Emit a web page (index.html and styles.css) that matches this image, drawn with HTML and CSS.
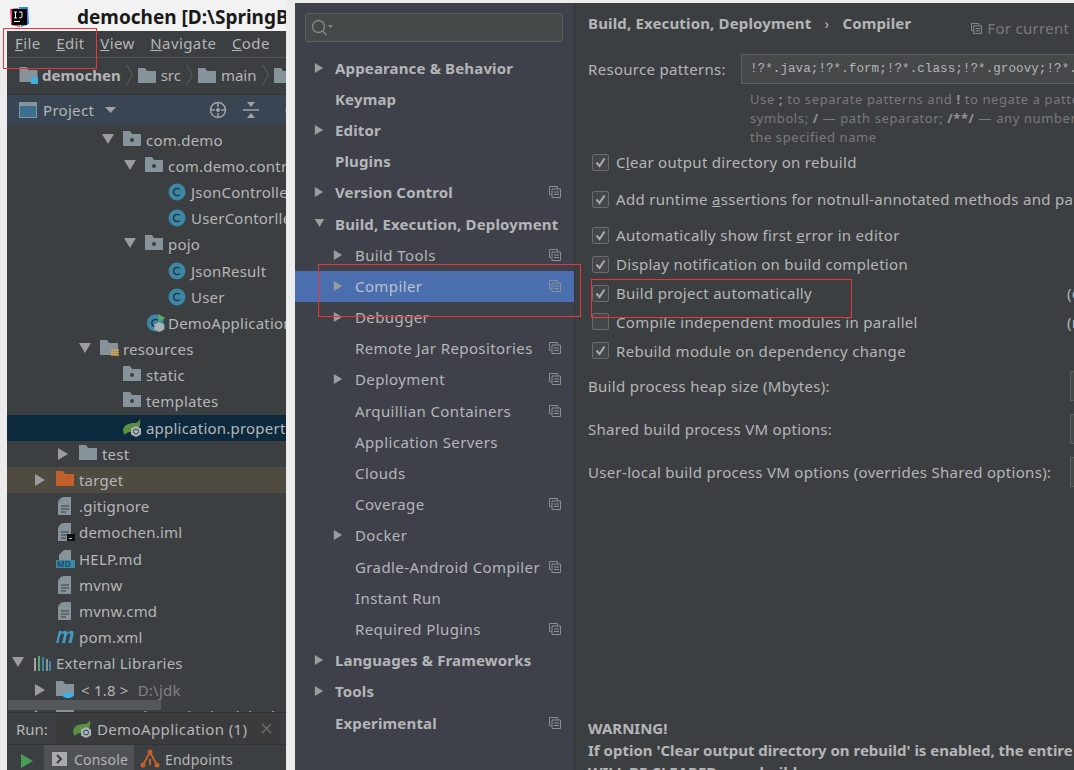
FILE: index.html
```html
<!DOCTYPE html>
<html lang="en">
  <head>
    <meta charset="UTF-8" />
    <title>demochen - Settings</title>
    <link rel="stylesheet" href="styles.css">
  </head>
  <body>
    <svg class="defs" width="0" height="0">
      <symbol id="right" viewBox="0 0 12 14"><path d="M1 1l10 6-10 6z" fill="#9a9c9e"/></symbol>
      <symbol id="down" viewBox="0 0 14 12"><path d="M1 1h12l-6 10z" fill="#9a9c9e"/></symbol>
      <symbol id="pkg" viewBox="0 0 18 15"><path d="M0 0h7l2 3h9v12H0z" fill="#87939a"/><circle cx="9" cy="9" r="2" fill="#3c3f41"/></symbol>
      <symbol id="folder" viewBox="0 0 18 15"><path d="M0 0h7l2 3h9v12H0z" fill="#87939a"/></symbol>
      <symbol id="cls" viewBox="0 0 18 18"><circle cx="9" cy="9" r="8.5" fill="#3d87a6"/><path d="M11.500 6.500a3.500 3.500 0 1 0 0 5" fill="none" stroke="#26323a" stroke-width="1.500"/></symbol>
      <symbol id="file" viewBox="0 0 14 18"><path d="M5 0h8v18H0V5z" fill="#87939a"/><path d="M4 0v4H0z" fill="#87939a"/><path d="M3 9h8M3 12h8M3 15h5" stroke="#3c3f41"/></symbol>
      <symbol id="leaf" viewBox="0 0 20 18"><path d="M0 11C1 5 7 4 12 4c2 0 4-2 5-4 1 6-1 13-8 13-3 0-5 0-7 3-1-1-2-3-2-5z" fill="#5d8f43"/><path d="M13 7l5 2.500v6L13 18l-5-2.500v-6z" fill="#a8b3ba"/><circle cx="13" cy="12.500" r="2.500" fill="none" stroke="#3c3f41"/></symbol>
      <symbol id="copy" viewBox="0 0 12 12"><path d="M.5.500h8v2M.5.500v8h2" fill="none" stroke="#8b8f92"/><path d="M3 3h8.500v8.500H3z" fill="none" stroke="#8b8f92"/><path d="M5 6h5M5 8.500h5" stroke="#8b8f92"/></symbol>
      <symbol id="check" viewBox="0 0 17 17"><path d="M4.500 8.500l3 3.500 5-7.500" fill="none" stroke="#a9abad" stroke-width="2"/></symbol>
      <symbol id="chev" viewBox="0 0 7 20"><path d="M.5 0l6 10-6 10" fill="none" stroke="#5d6062"/></symbol>
    </svg>

    <section class="ide">
      <header class="titlebar">
        <svg class="logo" width="20" height="20" viewBox="0 0 20 20"><path d="M1 2l8-1 2 19-9-2z" fill="#f0447c"/><path d="M10 0h9l1 17-8 3z" fill="#1e8fe0"/><rect x="3" y="2" width="15" height="16" fill="#000"/><rect x="5" y="14" width="6" height="1" fill="#fff"/><path d="M5 5h3M6.500 5v6M5 11h3M10 5h3v5c0 1-2 1-3 .500" fill="none" stroke="#fff"/></svg>
        <span class="title">demochen [D:\SpringBoot]</span>
      </header>
      <nav class="menu">
        <span><u>F</u>ile</span><span><u>E</u>dit</span><span><u>V</u>iew</span><span><u>N</u>avigate</span><span><u>C</u>ode</span>
      </nav>
      <div class="crumbs">
        <span class="crumb-root"><svg width="19" height="17"><use href="#folder" width="19" height="15"/><rect x="12" y="10" width="7" height="7" fill="#3eb1e0"/></svg><b>demochen</b></span>
        <svg width="7" height="20"><use href="#chev"/></svg>
        <svg width="18" height="15"><use href="#folder"/></svg><span>src</span>
        <svg width="7" height="20"><use href="#chev"/></svg>
        <svg width="18" height="15"><use href="#folder"/></svg><span>main</span>
        <svg width="7" height="20"><use href="#chev"/></svg>
        <svg width="18" height="15"><use href="#folder"/></svg>
      </div>
      <div class="toolbar">
        <svg class="win-icon" width="18" height="16"><rect x=".5" y=".5" width="17" height="15" fill="#3a6f8f" stroke="#87939a"/><rect x="1" y="1" width="16" height="3" fill="#87939a"/></svg>
        <span class="tool-name">Project</span>
        <svg class="caret" width="11" height="6"><path d="M0 0h11L5.500 6z" fill="#a0a2a4"/></svg>
        <span class="tool-sep"></span>
        <svg class="target" width="18" height="18" viewBox="0 0 18 18"><circle cx="9" cy="9" r="7.500" fill="none" stroke="#a0a2a4" stroke-width="1.500"/><circle cx="9" cy="9" r="2" fill="#a0a2a4"/><path d="M9 1v5M9 12v5M1 9h5M12 9h5" stroke="#a0a2a4" stroke-width="1.500"/></svg>
        <svg class="collapse" width="16" height="18" viewBox="0 0 16 18"><path d="M0 9h16" stroke="#a0a2a4" stroke-width="1.500"/><path d="M4 1h8L8 6zM4 17h8l-4-5z" fill="#a0a2a4"/></svg>
        <span class="tool-sep2"></span>
        <svg width="14" height="14"><circle cx="9" cy="7" r="4" fill="none" stroke="#a0a2a4" stroke-width="3"/></svg>
      </div>

      <ul class="tree">
        <li class="lv4"><svg class="arrow"><use href="#down" width="14" height="12"/></svg><svg class="ico"><use href="#pkg" width="18" height="15"/></svg>com.demo</li>
        <li class="lv5"><svg class="arrow"><use href="#down" width="14" height="12"/></svg><svg class="ico"><use href="#pkg" width="18" height="15"/></svg>com.demo.controller</li>
        <li class="lv6"><span class="arrow"></span><svg class="ico"><use href="#cls" width="18" height="18"/></svg>JsonController</li>
        <li class="lv6"><span class="arrow"></span><svg class="ico"><use href="#cls" width="18" height="18"/></svg>UserContorller</li>
        <li class="lv5"><svg class="arrow"><use href="#down" width="14" height="12"/></svg><svg class="ico"><use href="#pkg" width="18" height="15"/></svg>pojo</li>
        <li class="lv6"><span class="arrow"></span><svg class="ico"><use href="#cls" width="18" height="18"/></svg>JsonResult</li>
        <li class="lv6"><span class="arrow"></span><svg class="ico"><use href="#cls" width="18" height="18"/></svg>User</li>
        <li class="lv5"><span class="arrow"></span><svg class="ico" viewBox="0 0 20 18"><use href="#cls" width="18" height="18"/><path d="M12 0l7 4-7 4z" fill="#59a869"/><path d="M13 8l5 2.500v5L13 18l-5-2.500v-5z" fill="#a8b3ba"/></svg>DemoApplication</li>
        <li class="lv3"><svg class="arrow"><use href="#down" width="14" height="12"/></svg><svg class="ico"><use href="#folder" width="18" height="15"/><path d="M11 10h8M11 12.500h8M11 15h8" stroke="#d6a13a" stroke-width="1.500"/></svg>resources</li>
        <li class="lv4"><span class="arrow"></span><svg class="ico"><use href="#pkg" width="18" height="15"/></svg>static</li>
        <li class="lv4"><span class="arrow"></span><svg class="ico"><use href="#pkg" width="18" height="15"/></svg>templates</li>
        <li class="lv4 picked"><span class="arrow"></span><svg class="ico"><use href="#leaf" width="20" height="18"/></svg>application.properties</li>
        <li class="lv2"><svg class="arrow"><use href="#right" width="12" height="14"/></svg><svg class="ico"><use href="#folder" width="18" height="15"/></svg>test</li>
        <li class="lv1 excluded"><svg class="arrow"><use href="#right" width="12" height="14"/></svg><svg class="ico"><path d="M0 0h7l2 3h9v12H0z" fill="#c1602b"/></svg>target</li>
        <li class="lv1"><span class="arrow"></span><svg class="ico"><use href="#file" x="2" width="14" height="18"/></svg>.gitignore</li>
        <li class="lv1"><span class="arrow"></span><svg class="ico"><use href="#file" x="2" width="14" height="18"/><rect x="11" y="11" width="8" height="7" fill="#111"/><rect x="13" y="15" width="3" height="1" fill="#bbb"/></svg>demochen.iml</li>
        <li class="lv1"><span class="arrow"></span><svg class="ico"><path d="M8 0h7v10H3V5z" fill="#87939a"/><rect y="10" width="19" height="8" fill="#3d87a6"/><text class="md" x="1" y="17">MD</text></svg>HELP.md</li>
        <li class="lv1"><span class="arrow"></span><svg class="ico"><use href="#file" x="2" width="14" height="18"/></svg>mvnw</li>
        <li class="lv1"><span class="arrow"></span><svg class="ico"><use href="#file" x="2" width="14" height="18"/></svg>mvnw.cmd</li>
        <li class="lv1"><span class="arrow"></span><svg class="ico"><path d="M0 15L3 3h3l-.500 2c2-3 5-3 6 0 2-3 7-3 6 1l-2 9h-3l2-8c0-2-3-2-4 1l-1.500 7h-3l2-8c0-2-3-2-4 1l-1.500 7z" fill="#3d9bc4"/></svg>pom.xml</li>
        <li class="lv0"><svg class="arrow"><use href="#down" width="14" height="12"/></svg><svg class="ico"><path d="M1 4h2v13H1z" fill="#a0a2a4"/><path d="M5 2h2v15H5z" fill="#59a869"/><path d="M9 3h2v14H9z" fill="#3d87a6"/><path d="M13 5h2v12h-2z" fill="#87939a"/><path d="M16 7h2v10h-2z" fill="#3d87a6"/></svg>External Libraries</li>
        <li class="lv1"><svg class="arrow"><use href="#right" width="12" height="14"/></svg><svg class="ico"><use href="#folder" width="18" height="15"/><path d="M6 12h12c0 3-2 5-6 5s-6-2-6-5z" fill="#3eb1e0"/></svg><span class="jdk">&lt; 1.8 &gt;</span><span class="dim">D:\jdk</span></li>
        <li class="lv1"><svg class="arrow"><use href="#right" width="12" height="14"/></svg><svg class="ico"><use href="#folder" width="18" height="15"/></svg>Maven: ch.qos.logback:logback</li>
      </ul>
      <div class="h-scroll"></div>

      <div class="run-bar">
        <span class="run-label">Run:</span>
        <span class="run-tab"><svg width="20" height="18"><use href="#leaf" width="20" height="18"/></svg>DemoApplication (1)<svg class="close" width="11" height="11"><path d="M1 1l9 9M10 1l-9 9" stroke="#6e7173" stroke-width="1.200"/></svg></span>
      </div>
      <div class="console-bar">
        <svg class="play" width="14" height="16"><path d="M1 1l12 7-12 7z" fill="#499c54"/></svg>
        <span class="con-tab on"><svg width="15" height="14"><rect width="15" height="14" fill="#a9abad"/><path d="M5 3l4 4-4 4" fill="none" stroke="#3c3f41" stroke-width="2"/></svg>Console</span>
        <span class="con-tab"><svg width="20" height="20" viewBox="0 0 20 20"><path d="M10 3L3 16M10 3l7 13M10 10v6" stroke="#c1602b" stroke-width="2" fill="none"/><circle cx="10" cy="3" r="2.500" fill="#c1602b"/><circle cx="3" cy="16" r="2.500" fill="#c1602b"/><circle cx="17" cy="16" r="2.500" fill="#c1602b"/></svg>Endpoints</span>
      </div>
    </section>

    <section class="settings">
      <aside class="side">
        <div class="search">
          <svg width="22" height="18" viewBox="0 0 22 18"><circle cx="7.500" cy="7.500" r="6" fill="none" stroke="#85888a" stroke-width="1.300"/><path d="M11.500 12l4 4" stroke="#85888a" stroke-width="1.300"/><path d="M17 6h5l-2.500 3z" fill="#85888a"/></svg>
        </div>
        <ul class="side-list">
          <li class="top"><svg class="tw"><use href="#right" width="10" height="12"/></svg>Appearance &amp; Behavior</li>
          <li class="top"><span class="tw"></span>Keymap</li>
          <li class="top"><svg class="tw"><use href="#right" width="10" height="12"/></svg>Editor</li>
          <li class="top"><span class="tw"></span>Plugins</li>
          <li class="top"><svg class="tw"><use href="#right" width="10" height="12"/></svg>Version Control<svg class="cp"><use href="#copy" width="12" height="12"/></svg></li>
          <li class="top"><svg class="tw"><use href="#down" width="11" height="10"/></svg>Build, Execution, Deployment</li>
          <li class="sub"><svg class="tw"><use href="#right" width="10" height="12"/></svg>Build Tools<svg class="cp"><use href="#copy" width="12" height="12"/></svg></li>
          <li class="sub current"><svg class="tw"><use href="#right" width="10" height="12"/></svg>Compiler<svg class="cp"><use href="#copy" width="12" height="12"/></svg></li>
          <li class="sub"><svg class="tw"><use href="#right" width="10" height="12"/></svg>Debugger</li>
          <li class="sub"><span class="tw"></span>Remote Jar Repositories<svg class="cp"><use href="#copy" width="12" height="12"/></svg></li>
          <li class="sub"><svg class="tw"><use href="#right" width="10" height="12"/></svg>Deployment<svg class="cp"><use href="#copy" width="12" height="12"/></svg></li>
          <li class="sub"><span class="tw"></span>Arquillian Containers<svg class="cp"><use href="#copy" width="12" height="12"/></svg></li>
          <li class="sub"><span class="tw"></span>Application Servers</li>
          <li class="sub"><span class="tw"></span>Clouds</li>
          <li class="sub"><span class="tw"></span>Coverage<svg class="cp"><use href="#copy" width="12" height="12"/></svg></li>
          <li class="sub"><svg class="tw"><use href="#right" width="10" height="12"/></svg>Docker</li>
          <li class="sub"><span class="tw"></span>Gradle-Android Compiler<svg class="cp"><use href="#copy" width="12" height="12"/></svg></li>
          <li class="sub"><span class="tw"></span>Instant Run</li>
          <li class="sub"><span class="tw"></span>Required Plugins<svg class="cp"><use href="#copy" width="12" height="12"/></svg></li>
          <li class="top"><svg class="tw"><use href="#right" width="10" height="12"/></svg>Languages &amp; Frameworks</li>
          <li class="top"><svg class="tw"><use href="#right" width="10" height="12"/></svg>Tools</li>
          <li class="top"><span class="tw"></span>Experimental<svg class="cp"><use href="#copy" width="12" height="12"/></svg></li>
        </ul>
      </aside>

      <main class="panel">
        <div class="heading">
          <b>Build, Execution, Deployment</b><span class="gt">›</span><b>Compiler</b>
          <span class="scope"><svg width="11" height="11"><use href="#copy" width="11" height="11"/></svg>For current project</span>
        </div>
        <div class="patterns">
          <label>Resource patterns:</label>
          <div class="pattern-box">!?*.java;!?*.form;!?*.class;!?*.groovy;!?*.scala;!?*.flex</div>
        </div>
        <p class="hint">Use <b>;</b> to separate patterns and <b>!</b> to negate a pattern. Accepted wildcards: <b>?</b> — exactly one<br>symbols; <b>/</b> — path separator; <b>/**/</b> — any number of directories; <b>&lt;dir_name&gt;:&lt;pattern&gt;</b> restrict to<br>the specified name</p>

        <div class="chk chk-first"><span class="box"><svg width="17" height="17"><use href="#check"/></svg></span><span>C<u>l</u>ear output directory on rebuild</span></div>
        <div class="chk chk-wide"><span class="box"><svg width="17" height="17"><use href="#check"/></svg></span><span>Add runtime <u>a</u>ssertions for notnull-annotated methods and parameters</span></div>
        <div class="chk"><span class="box"><svg width="17" height="17"><use href="#check"/></svg></span><span>Automatically show first <u>e</u>rror in editor</span></div>
        <div class="chk"><span class="box"><svg width="17" height="17"><use href="#check"/></svg></span><span>Display notification on build completion</span></div>
        <div class="chk noted"><span class="lbl"><span class="box"><svg width="17" height="17"><use href="#check"/></svg></span>Build project automatically</span><span>(only works while not running / debugging)</span></div>
        <div class="chk noted"><span class="lbl"><span class="box"></span>Compile independent modules in parallel</span><span>(may require larger heap size)</span></div>
        <div class="chk"><span class="box"><svg width="17" height="17"><use href="#check"/></svg></span><span>Rebuild module on dependency change</span></div>

        <div class="opt opt-first"><label>Build process heap size (Mbytes):</label><span class="field"></span></div>
        <div class="opt"><label>Shared build process VM options:</label><span class="field"></span></div>
        <div class="opt"><label>User-local build process VM options (overrides Shared options):</label><span class="field"></span></div>

        <div class="warning">WARNING!<br>If option 'Clear output directory on rebuild' is enabled, the entire contents of directories where<br>WILL BE CLEARED on rebuild.</div>
      </main>
    </section>

    <div class="mark mark-menu"></div>
    <div class="mark mark-compiler"></div>
    <div class="mark mark-build"></div>
  </body>
</html>
```

FILE: styles.css
```css
* {
  box-sizing: border-box;
}

html,
body {
  height: 100%;
}

body {
  margin: 0;
  display: flex;
  overflow: hidden;
  background-color: #ececec;
  color: #b4b6b8;
  font-family: "Noto Sans", sans-serif;
  font-size: 15px;
  white-space: nowrap;
}

ul {
  list-style: none;
  margin: 0;
  padding: 0;
}

svg {
  flex: none;
}

.defs {
  position: absolute;
}

/* left: IDE window */
.ide {
  width: 286px;
  padding-left: 7px;
  margin-right: 9px;
  display: flex;
  flex-direction: column;
  flex: none;
  overflow: hidden;
}

.titlebar {
  height: 31px;
  margin-left: -7px;
  padding: 2px 0 0 9px;
  background-color: #f2f2f2;
  display: flex;
  align-items: center;
  flex: none;
}

.title {
  margin-left: 48px;
  color: #1a1a1a;
  font-size: 19px;
  font-weight: 700;
}

.menu {
  height: 27px;
  padding: 0 0 2px 8px;
  background-color: #3c3f41;
  border-bottom: 1px solid #515456;
  display: flex;
  align-items: center;
  gap: 15.6px;
  letter-spacing: 0.4px;
  flex: none;
}

.crumbs {
  height: 36px;
  padding: 0 0 2px 12px;
  background-color: #3c3f41;
  display: flex;
  align-items: center;
  gap: 5px;
  flex: none;
}

.crumb-root {
  display: flex;
  align-items: center;
  gap: 4px;
}

.toolbar {
  height: 31px;
  padding: 0 0 1px 12px;
  background-color: #3a4553;
  border-top: 1px solid #333638;
  display: flex;
  align-items: center;
  flex: none;
}

.tool-name {
  margin-left: 6px;
  letter-spacing: 0.3px;
}

.caret {
  margin-left: 11px;
}

.tool-sep {
  width: 1px;
  height: 30px;
  margin: 0 16px 0 77px;
  background-color: #2f3338;
}

.collapse {
  margin-left: 16px;
}

.tool-sep2 {
  width: 1px;
  height: 22px;
  margin: 0 10px 0 13px;
  background-color: #4c5561;
}

.tree {
  height: 587px;
  padding-top: 1.5px;
  background-color: #3c3f41;
  letter-spacing: 0.22px;
  overflow: hidden;
  flex: none;
}

.tree li {
  height: 26.2px;
  display: flex;
  align-items: center;
}

.lv0 { padding-left: 4px; }
.lv1 { padding-left: 27px; }
.lv2 { padding-left: 50px; }
.lv3 { padding-left: 71px; }
.lv4 { padding-left: 94px; }
.lv5 { padding-left: 116px; }
.lv6 { padding-left: 139px; }

.arrow {
  width: 22.4px;
  height: 14px;
  flex: none;
}

.ico {
  width: 22.6px;
  height: 18px;
  flex: none;
}

.md {
  fill: #1f5068;
  font-size: 8px;
  font-weight: 700;
}

.tree .picked {
  background-color: #0d293e;
}

.tree .excluded {
  background-color: #4f4b41;
}

.jdk {
  margin-left: 2px;
}

.dim {
  margin-left: 9px;
  color: #808284;
}

.h-scroll {
  position: absolute;
  left: 8px;
  top: 700px;
  width: 153px;
  height: 10px;
  background-color: #55585a;
}

.run-bar {
  height: 32px;
  background-color: #3c3f41;
  border-top: 1px solid #323232;
  display: flex;
  align-items: center;
  flex: none;
}

.run-label {
  margin-left: 9px;
}

.run-tab {
  height: 30px;
  margin-left: 9px;
  padding: 0 8px 0 16px;
  background-color: #393b3d;
  letter-spacing: 0.4px;
  display: flex;
  align-items: center;
  gap: 4px;
}

.close {
  margin-left: 9px;
}

.console-bar {
  height: 26px;
  background-color: #3c3f41;
  border-top: 1px solid #333;
  display: flex;
  align-items: center;
  flex: none;
  font-size: 14px;
  letter-spacing: 0.2px;
}

.play {
  margin: 6px 10px 0 13px;
}

.con-tab {
  height: 26px;
  padding: 3px 4px 0 6px;
  display: flex;
  align-items: center;
  gap: 5px;
}

.con-tab.on {
  width: 90px;
  padding-left: 8px;
  gap: 7px;
  background-color: #4e5254;
}

/* right: settings dialog */
.settings {
  flex: none;
  width: 779px;
  margin-top: 3px;
  display: flex;
}

.side {
  width: 280px;
  padding-top: 10px;
  background-color: #3e414a;
  border-right: 1px solid #333638;
  flex: none;
}

.search {
  width: 258px;
  height: 29px;
  margin-left: 10px;
  padding: 5px 0 0 5px;
  background-color: #45494a;
  border: 1px solid #5b5e5f;
  border-radius: 3px;
}

.side-list {
  margin-top: 10.5px;
}

.side-list li {
  height: 31.2px;
  padding-bottom: 1px;
  display: flex;
  align-items: center;
}

.top {
  padding-left: 19px;
  font-weight: 700;
  letter-spacing: 0.15px;
}

.sub {
  padding-left: 38px;
  letter-spacing: 0.4px;
}

.tw {
  width: 21px;
  height: 12px;
  flex: none;
}

.sub .tw {
  width: 22px;
}

.cp {
  width: 12px;
  height: 12px;
  margin-left: auto;
  margin-right: 13px;
}

.side-list .current {
  background-color: #4b6eaf;
  color: #b9c2d0;
}

.panel {
  width: 499px;
  height: 767px;
  padding-left: 13px;
  background-color: #3c3f41;
  letter-spacing: 0.3px;
  overflow: hidden;
}

.heading {
  height: 42px;
  padding-bottom: 2px;
  display: flex;
  align-items: center;
}

.heading b {
  letter-spacing: 0.15px;
}

.gt {
  margin: 0 13px;
}

.scope {
  margin: 10px 0 0 60px;
  color: #787a7c;
  display: flex;
  align-items: center;
  gap: 5px;
}

.patterns {
  height: 30px;
  margin-top: 9px;
  display: flex;
  align-items: center;
}

.patterns label {
  width: 153px;
  flex: none;
}

.pattern-box {
  width: 400px;
  height: 30px;
  padding-left: 8px;
  line-height: 28px;
  background-color: #45494a;
  border: 1px solid #5b5e5f;
  font-family: "Liberation Mono", monospace;
  font-size: 12.500px;
  letter-spacing: 0.1px;
  flex: none;
}

.hint {
  margin: 6px 0 0 162px;
  color: #787a7c;
  font-size: 13px;
  line-height: 19px;
  letter-spacing: 0.6px;
}

.hint b {
  color: #909294;
}

.chk {
  height: 28.9px;
  padding-left: 4px;
  display: flex;
  align-items: center;
}

.chk-first {
  margin-top: 1px;
}

.chk-wide {
  margin: 8px 0 7px;
}

.noted {
  display: grid;
  grid-template-columns: 475px auto;
  align-items: center;
}

.lbl {
  display: flex;
  align-items: center;
}

.box {
  width: 17px;
  height: 17px;
  margin-right: 7px;
  background-color: #43474a;
  border: 1px solid #6b6b6b;
  border-radius: 2px;
  display: flex;
  flex: none;
}

.box svg {
  margin: -1px;
}

.opt {
  height: 30px;
  margin-top: 13px;
  display: grid;
  grid-template-columns: 482px 60px;
  align-items: center;
}

.opt-first {
  margin-top: 6px;
}

.field {
  height: 30px;
  background-color: #45494a;
  border: 1px solid #5b5e5f;
}

.warning {
  margin-top: 230px;
  font-weight: 700;
  line-height: 22px;
  letter-spacing: 0;
}

/* red annotations drawn over the screenshot */
.mark {
  position: absolute;
  border: 1px solid #e93636;
}

.mark-menu {
  left: 3px;
  top: 28px;
  width: 94px;
  height: 41px;
}

.mark-compiler {
  left: 318px;
  top: 264px;
  width: 263px;
  height: 53px;
}

.mark-build {
  left: 591px;
  top: 279px;
  width: 261px;
  height: 39px;
}
```
